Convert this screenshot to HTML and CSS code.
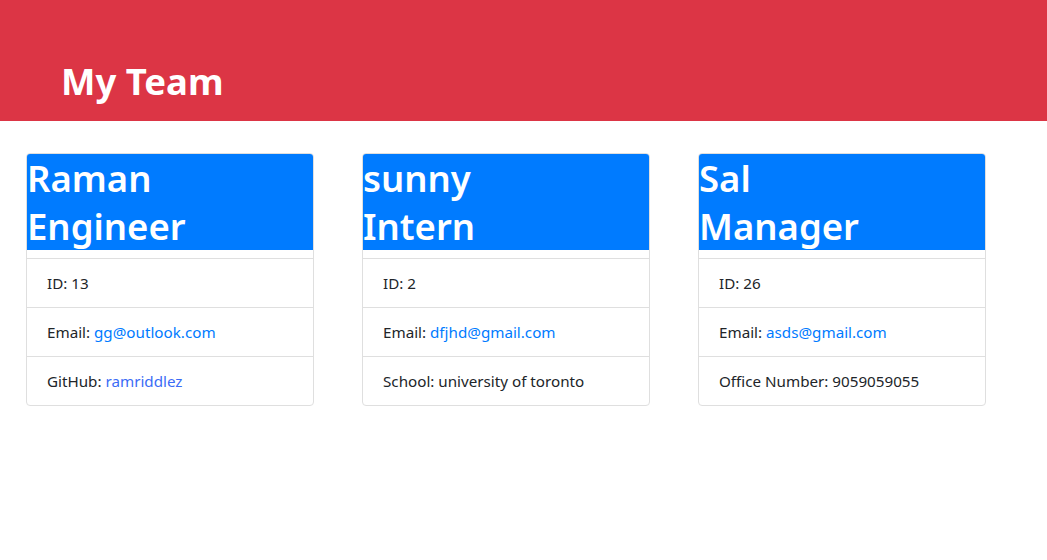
FILE: index.html
```html
<!DOCTYPE html>
<html>
<head>
<meta charset="utf-8">
<title>My Team</title>
<link rel="stylesheet" href="styles.css">
</head>
<body>
<header class="jumbo">
  <h1 class="jumbo-title">My Team</h1>
</header>
<main class="team">
  <div class="card">
    <h2 class="card-head">Raman<br>Engineer</h2>
    <ul class="list">
      <li class="item">ID: 13</li>
      <li class="item">Email: <a class="link" href="#">gg@outlook.com</a></li>
      <li class="item">GitHub: <a class="link gh" href="#">ramriddlez</a></li>
    </ul>
  </div>
  <div class="card">
    <h2 class="card-head">sunny<br>Intern</h2>
    <ul class="list">
      <li class="item">ID: 2</li>
      <li class="item">Email: <a class="link" href="#">dfjhd@gmail.com</a></li>
      <li class="item">School: university of toronto</li>
    </ul>
  </div>
  <div class="card">
    <h2 class="card-head">Sal<br>Manager</h2>
    <ul class="list">
      <li class="item">ID: 26</li>
      <li class="item">Email: <a class="link" href="#">asds@gmail.com</a></li>
      <li class="item">Office Number: 9059059055</li>
    </ul>
  </div>
</main>
</body>
</html>
```
FILE: styles.css
```css
* { box-sizing: border-box; }
body {
  margin: 0;
  font-family: "Noto Sans", "Open Sans", sans-serif;
  font-size: 16px;
  line-height: 24px;
  color: #212529;
  background: #fff;
}
.jumbo {
  background: #dc3545;
  height: 121px;
  padding: 57px 0 0 61px;
}
.jumbo-title {
  margin: 0;
  color: #fff;
  font-size: 36.5px;
  line-height: 48px;
  font-weight: 700;
}
.team {
  display: flex;
  gap: 48px;
  padding: 32px 26px;
}
.card {
  width: 288px;
  border: 1px solid #dfdfdf;
  border-radius: 4px;
  overflow: hidden;
}
.card-head {
  margin: 0 0 8px;
  background: #007bff;
  color: #fff;
  font-size: 36.5px;
  line-height: 48px;
  font-weight: 600;
  padding-left: 0;
}
.list {
  list-style: none;
  margin: 0;
  padding: 0;
}
.item {
  border-top: 1px solid #dfdfdf;
  padding: 12px 20px;
  height: 49px;
  font-size: 15.2px;
}
.link {
  color: #007bff;
  text-decoration: none;
}
.gh { color: #3b6cf6; }
```
